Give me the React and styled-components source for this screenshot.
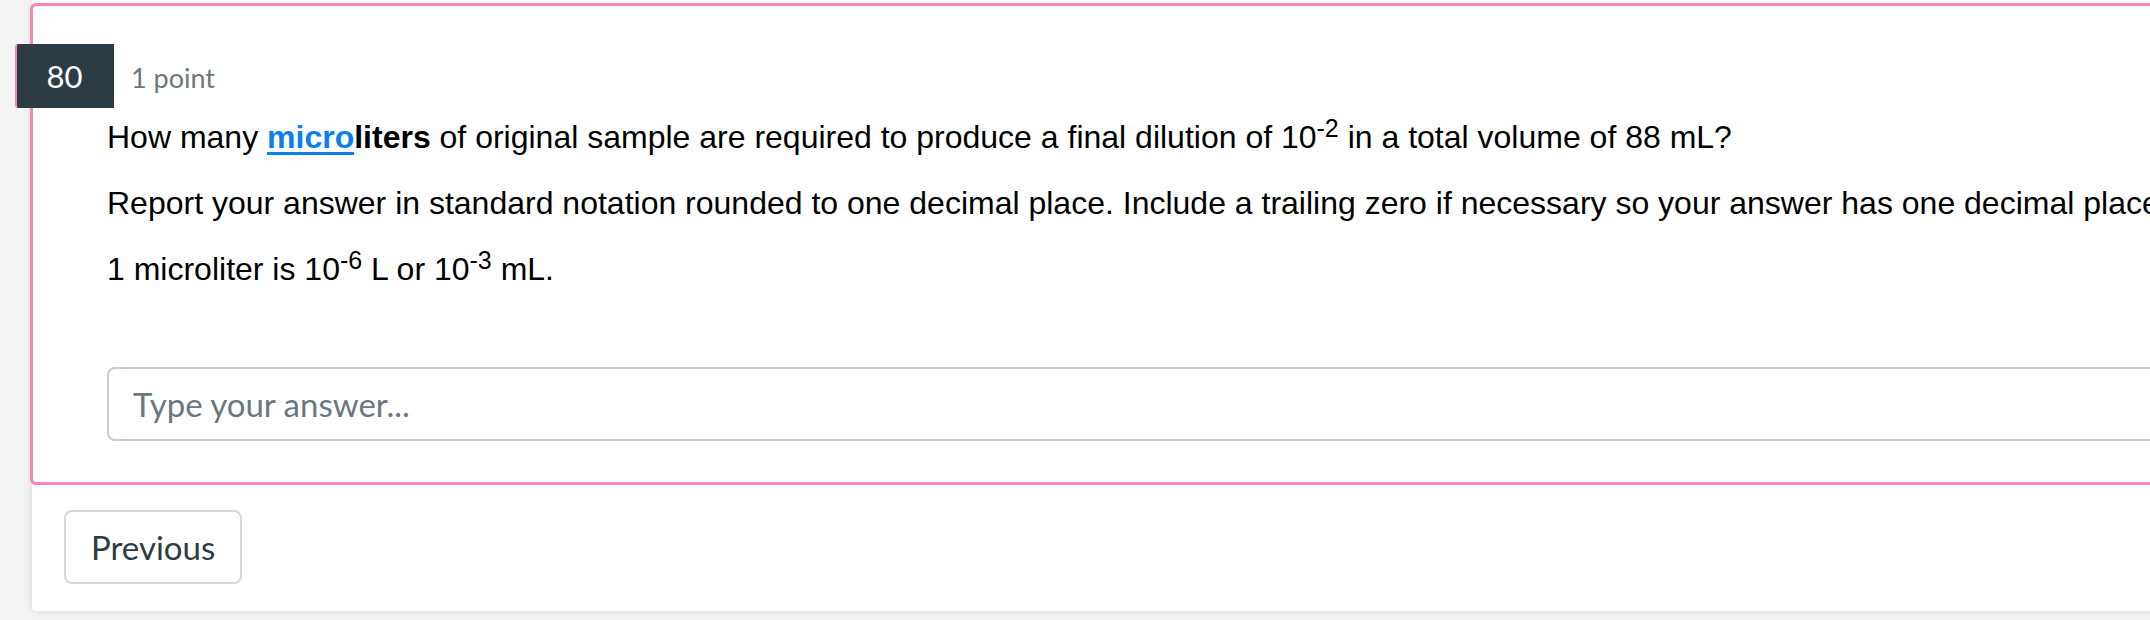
import React from "react";
import styled, { createGlobalStyle } from "styled-components";

const GlobalStyle = createGlobalStyle`
  html, body {
    margin: 0;
    padding: 0;
    background: #f4f4f4;
    overflow: hidden;
  }
  * {
    box-sizing: border-box;
  }
`;

const Page = styled.div`
  width: 2150px;
  height: 620px;
  overflow: hidden;
  padding-left: 32px;
`;

const Panel = styled.div`
  width: 2400px;
  background: #ffffff;
  box-shadow: 0 0 10px rgba(0, 0, 0, 0.12);
  border-radius: 0 0 0 4px;
  padding-bottom: 27px;
`;

const QuestionCard = styled.div`
  margin-left: -2px;
  position: relative;
  top: 3px;
  border: 3px solid #f586b8;
  border-radius: 6px;
  padding: 38px 0 41px 74px;
  background: #ffffff;
`;

const Header = styled.div`
  display: flex;
  align-items: center;
  gap: 17px;
  margin-left: -92px;
  height: 64px;
`;

const Badge = styled.div`
  width: 99px;
  height: 64px;
  background: #2d3b45;
  border-left: 2px solid #f586b8;
  border-radius: 3px 0 0 3px;
  display: flex;
  align-items: center;
  justify-content: center;
  color: #ffffff;
  font-family: Lato, "Open Sans", sans-serif;
  font-size: 31px;
  padding-right: 2px;
`;

const Points = styled.div`
  color: #6b7780;
  font-family: Lato, "Open Sans", sans-serif;
  font-size: 27px;
  margin-top: 2px;
`;

const Body = styled.div`
  margin-top: 5px;
  font-family: "Liberation Sans", Arial, sans-serif;
  font-size: 32px;
  line-height: 48px;
  color: #000000;
  white-space: nowrap;
`;

const Para = styled.p`
  margin: 0 0 18px 0;
`;

const Link = styled.a`
  color: #0b7ef0;
  font-weight: bold;
  text-decoration: underline;
  text-underline-offset: 4px;
  text-decoration-thickness: 3px;
`;

const Sup = styled.sup`
  font-size: 25px;
  line-height: 0;
  vertical-align: 0.45em;
`;

const AnswerInput = styled.input`
  display: block;
  margin-top: 74px;
  width: 2200px;
  height: 74px;
  border: 2px solid #c7cdd1;
  border-radius: 8px;
  padding: 0 24px;
  font-family: Lato, "Open Sans", sans-serif;
  font-size: 33px;
  color: #2d3b45;
  outline: none;

  &::placeholder {
    color: #6b7780;
  }
`;

const Footer = styled.div`
  padding: 28px 0 0 32px;
`;

const Button = styled.button`
  height: 74px;
  padding: 0 25px;
  background: #ffffff;
  border: 2px solid #d5d7d9;
  border-radius: 8px;
  font-family: Lato, "Open Sans", sans-serif;
  font-size: 33px;
  color: #2d3b45;
  cursor: pointer;
`;

const App = () => {
  return (
    <>
      <GlobalStyle />
      <Page>
        <Panel>
          <QuestionCard>
            <Header>
              <Badge>80</Badge>
              <Points>1 point</Points>
            </Header>
            <Body>
              <Para>
                How many <Link href="#">micro</Link><b>liters</b> of original sample are required to produce a final dilution of 10<Sup>-2</Sup> in a total volume of 88 mL?
              </Para>
              <Para>
                Report your answer in standard notation rounded to one decimal place. Include a trailing zero if necessary so your answer has one decimal place.
              </Para>
              <Para>
                1 microliter is 10<Sup>-6</Sup> L or 10<Sup>-3</Sup> mL.
              </Para>
            </Body>
            <AnswerInput placeholder="Type your answer..." />
          </QuestionCard>
          <Footer>
            <Button>Previous</Button>
          </Footer>
        </Panel>
      </Page>
    </>
  );
};

export default App;
